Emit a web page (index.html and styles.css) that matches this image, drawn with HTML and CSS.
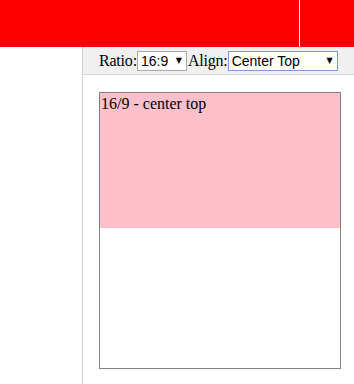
FILE: index.html
```html
<!DOCTYPE html>
<html>
<head>
<meta charset="utf-8">
<link rel="stylesheet" href="styles.css">
</head>
<body>
<header class="topbar">
  <div class="topbar-main"></div>
  <div class="topbar-side"></div>
</header>
<div class="main">
  <aside class="sidebar"></aside>
  <section class="content">
    <div class="toolbar">
      <label class="lbl">Ratio:</label><span class="sel sel-ratio"><select><option>16:9</option></select><span class="arrow">▼</span></span><label class="lbl">Align:</label><span class="sel sel-align focus"><select><option>Center Top</option></select><span class="arrow">▼</span></span>
    </div>
    <div class="stage">
      <div class="frame">
        <div class="media">16/9 - center top</div>
      </div>
    </div>
  </section>
</div>
</body>
</html>
```
FILE: styles.css
```css
html, body {
  margin: 0;
  padding: 0;
  background: #fff;
  font-family: "Liberation Serif", "Times New Roman", serif;
  font-size: 16px;
  color: #000;
}
.topbar {
  display: flex;
  height: 47px;
  background: #ff0000;
}
.topbar-main {
  width: 299px;
  flex-shrink: 0;
}
.topbar-side {
  flex: 1;
  border-left: 1px solid #fff;
}
.main {
  display: flex;
  height: 337px;
}
.sidebar {
  width: 82px;
  flex-shrink: 0;
  border-right: 1px solid #d0d0d0;
}
.content {
  flex: 1;
  min-width: 0;
}
.toolbar {
  display: flex;
  align-items: center;
  height: 27px;
  padding-left: 16px;
  background: #f0f0f0;
  border-bottom: 1px solid #d8d8d8;
  white-space: nowrap;
}
.lbl {
  line-height: 18px;
  letter-spacing: -0.2px;
}
.sel {
  position: relative;
  display: inline-block;
  height: 20px;
}
.sel select {
  appearance: none;
  -webkit-appearance: none;
  height: 20px;
  margin: 0;
  padding: 0 0 0 3px;
  border: 1px solid #a9a9a9;
  border-radius: 0;
  background: #fff;
  font-family: "Liberation Sans", Arial, sans-serif;
  font-size: 14px;
  color: #000;
  box-sizing: border-box;
}
.sel-ratio {
  margin-right: 1px;
}
.sel-ratio select {
  width: 50px;
}
.sel-align select {
  width: 110px;
  border-color: #7a9bd6;
}
.arrow {
  position: absolute;
  top: 4px;
  right: 5px;
  font-family: "DejaVu Sans", sans-serif;
  font-size: 8px;
  line-height: 12px;
  color: #000;
  pointer-events: none;
}
.stage {
  padding: 17px 16px;
}
.frame {
  width: 240px;
  height: 275px;
  border: 1px solid #808080;
}
.media {
  height: 135px;
  background: #ffc0cb;
  padding: 2px 1px;
  box-sizing: border-box;
  line-height: 18px;
}
```
